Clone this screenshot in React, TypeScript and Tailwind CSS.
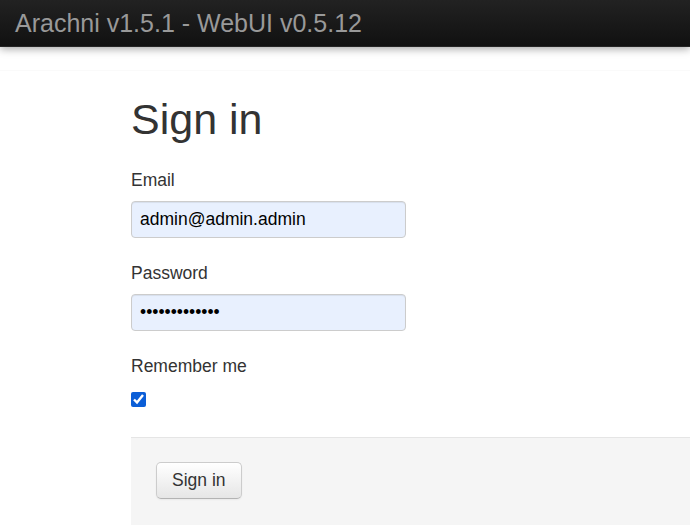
export default function App() {
  return (
    <div className="min-h-[532px] bg-white font-['Liberation_Sans',Arial,sans-serif] text-[#333] overflow-hidden">
      {/* Navbar */}
      <div className="h-[47px] bg-gradient-to-b from-[#222] to-[#111] border-b border-[#252525] shadow-[0_2px_8px_rgba(0,0,0,0.35)] flex items-center px-[15px]">
        <span className="text-[25px] leading-[30px] text-[#999]">Arachni v1.5.1 - WebUI v0.5.12</span>
      </div>
      <div className="h-[24px] border-b border-[#fafafa]" />

      {/* Form */}
      <div className="pl-[131px]">
        <h1 className="text-[43px] leading-[50px] text-[#333] mt-[23px] mb-[10px]">Sign in</h1>

        <label className="block text-[17.5px] leading-[25px] mb-[8px] mt-[24px]">Email</label>
        <input
          type="email"
          defaultValue="admin@admin.admin"
          className="block w-[275px] h-[37px] px-[8px] text-[17.5px] text-black bg-[#e8f0fe] border border-[#ccc] rounded-[4px] shadow-[inset_0_1px_1px_rgba(0,0,0,0.075)] outline-none"
        />

        <label className="block text-[17.5px] leading-[25px] mt-[23px] mb-[8px]">Password</label>
        <input
          type="password"
          defaultValue="administrator"
          className="block w-[275px] h-[37px] px-[8px] text-[17.5px] text-black bg-[#e8f0fe] border border-[#ccc] rounded-[4px] shadow-[inset_0_1px_1px_rgba(0,0,0,0.075)] outline-none"
        />

        <label className="block text-[17.5px] leading-[25px] mt-[23px] mb-[13px]">Remember me</label>
        <input type="checkbox" defaultChecked className="block w-[15px] h-[15px] m-0 accent-[#0b5ed7]" />

        <div className="mt-[30px] bg-[#f5f5f5] border-t border-[#e5e5e5] pt-[24px] pb-[26px] pl-[25px]">
          <button className="h-[37px] px-[15px] text-[17.5px] text-[#333] rounded-[5px] border border-[#ccc] border-b-[#b3b3b3] bg-gradient-to-b from-white to-[#e6e6e6] shadow-[inset_0_1px_0_rgba(255,255,255,0.2),0_1px_2px_rgba(0,0,0,0.05)]">
            Sign in
          </button>
        </div>
      </div>
    </div>
  );
}
